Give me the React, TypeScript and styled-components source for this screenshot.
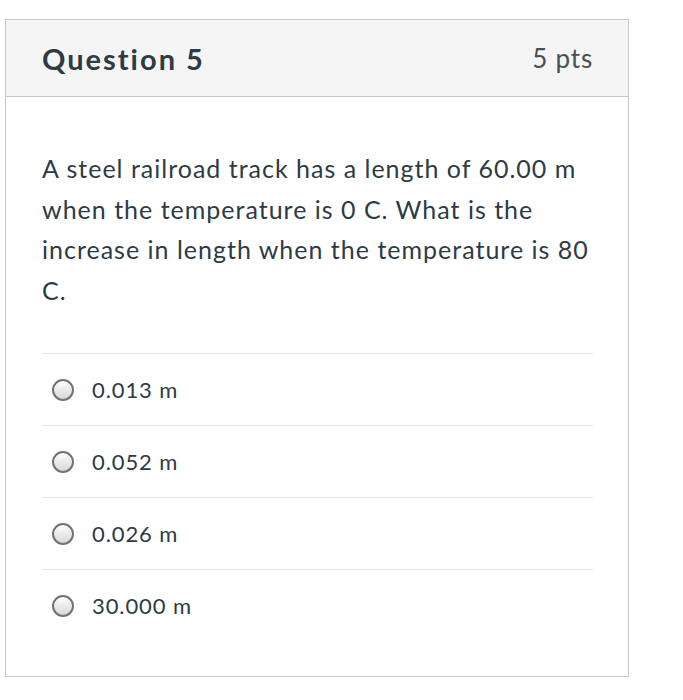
import React from 'react';
import styled, { createGlobalStyle } from 'styled-components';

const GlobalStyle = createGlobalStyle`
  body {
    margin: 0;
    background: #fff;
    font-family: Lato, "Open Sans", sans-serif;
    color: #2d3b45;
  }
`;

const answers = ['0.013 m', '0.052 m', '0.026 m', '30.000 m'];

const App = () => {
  return (
    <>
      <GlobalStyle />
      <Card>
        <Header>
          <Title>Question 5</Title>
          <Points>5 pts</Points>
        </Header>
        <Body>
          <QuestionText>
            A steel railroad track has a length of 60.00 m when the temperature
            is 0 C. What is the increase in length when the temperature is 80 C.
          </QuestionText>
          <Answers>
            {answers.map((a) => (
              <Answer key={a}>
                <Radio />
                <AnswerLabel>{a}</AnswerLabel>
              </Answer>
            ))}
          </Answers>
        </Body>
      </Card>
    </>
  );
};

const Card = styled.div`
  margin: 19px 0 0 5px;
  width: 624px;
  box-sizing: border-box;
  border: 1px solid #c4c8cb;
  background: #fff;
`;

const Header = styled.div`
  height: 77px;
  box-sizing: border-box;
  padding: 0 35px 0 36px;
  display: flex;
  align-items: center;
  justify-content: space-between;
  background: #f5f5f5;
  border-bottom: 1px solid #c4c8cb;
`;

const Title = styled.h2`
  margin: 0;
  font-size: 29px;
  letter-spacing: 2px;
  font-weight: 700;
  color: #2d3b45;
`;

const Points = styled.span`
  font-size: 26px;
  letter-spacing: 0.8px;
  color: #4a4f54;
`;

const Body = styled.div`
  padding: 51px 35px 35px 36px;
`;

const QuestionText = styled.p`
  margin: 0 -12px 43px 0;
  font-size: 25px;
  letter-spacing: 1px;
  line-height: 40.5px;
  color: #2d3b45;
`;

const Answers = styled.div`
  display: flex;
  flex-direction: column;
`;

const Answer = styled.div`
  height: 72px;
  box-sizing: border-box;
  border-top: 1.5px solid #e1e3e5;
  display: flex;
  align-items: center;
  padding-left: 10px;
  gap: 18px;
`;

const Radio = styled.span`
  width: 22px;
  height: 22px;
  box-sizing: border-box;
  border-radius: 50%;
  border: 2px solid #6e7378;
  background: linear-gradient(#fdfdfd, #d8d8d8);
  flex-shrink: 0;
`;

const AnswerLabel = styled.span`
  font-size: 22px;
  letter-spacing: 0.9px;
  color: #2d3b45;
`;

export default App;
